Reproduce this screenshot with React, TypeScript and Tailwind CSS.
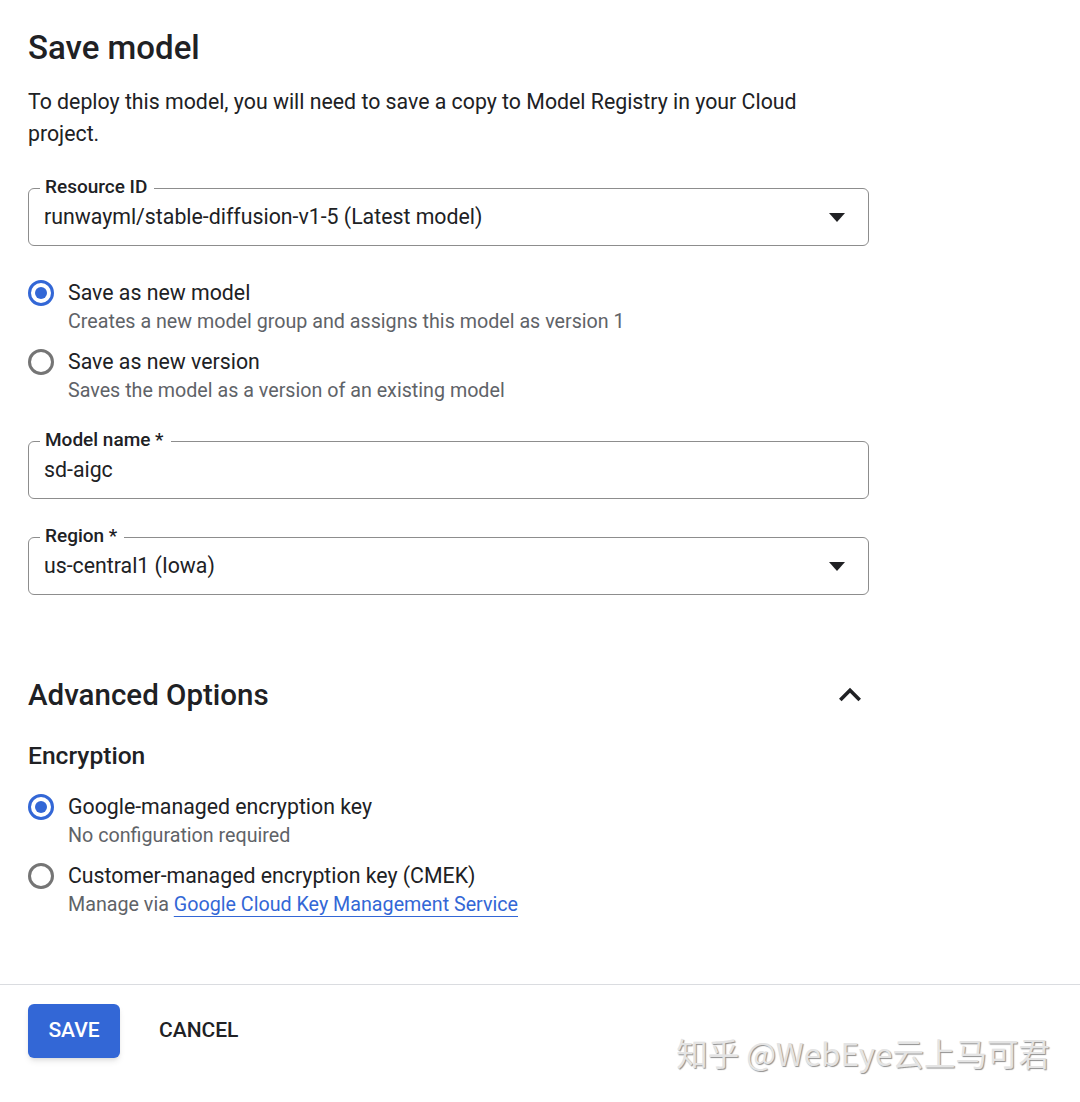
import type { ReactNode } from 'react';

const DropTriangle = () => (
  <svg width="16" height="9" viewBox="0 0 16 9" className="shrink-0">
    <polygon points="0,0 16,0 8,9" fill="#202124" />
  </svg>
);

const OutlinedField = ({ label, value, select }: { label: string; value: string; select?: boolean }) => (
  <div className="relative flex h-[58px] w-[841px] items-center justify-between rounded-[6px] border border-[#8d8d8d] pl-[15px] pr-[23px]">
    <span className="absolute left-[11px] top-[-15px] bg-white pl-[5px] pr-[7px] text-[19px] font-medium leading-[26px] text-[#202124]">
      {label}
    </span>
    <span className="text-[21.3px] leading-[30px] text-[#202124]">{value}</span>
    {select && <DropTriangle />}
  </div>
);

const Radio = ({ checked }: { checked?: boolean }) =>
  checked ? (
    <span className="mt-[2px] flex h-[26px] w-[26px] shrink-0 items-center justify-center rounded-full border-[3px] border-[#3367d6]">
      <span className="h-[12px] w-[12px] rounded-full bg-[#3367d6]" />
    </span>
  ) : (
    <span className="mt-[2px] h-[26px] w-[26px] shrink-0 rounded-full border-[3px] border-[#757575]" />
  );

const RadioOption = ({ checked, label, desc }: { checked?: boolean; label: string; desc: ReactNode }) => (
  <div className="flex gap-[14px]">
    <Radio checked={checked} />
    <div className="flex flex-col">
      <span className="text-[21.3px] leading-[30px] text-[#202124]">{label}</span>
      <span className="text-[19.7px] leading-[28px] text-[#5f6368]">{desc}</span>
    </div>
  </div>
);

export default function App() {
  return (
    <div className="relative min-h-[1102px] bg-white font-['Roboto','Liberation_Sans',sans-serif] text-[#202124]">
      <div className="flex flex-col pl-[28px] pt-[28px]">
        <h1 className="text-[33px] font-medium leading-[40px]">Save model</h1>
        <p className="mt-[18px] w-[841px] text-[21.3px] leading-[32px]">
          To deploy this model, you will need to save a copy to Model Registry in your Cloud project.
        </p>

        <div className="mt-[38px]">
          <OutlinedField label="Resource ID" value="runwayml/stable-diffusion-v1-5 (Latest model)" select />
        </div>

        <div className="mt-[32px] flex flex-col gap-[11px]">
          <RadioOption checked label="Save as new model" desc="Creates a new model group and assigns this model as version 1" />
          <RadioOption label="Save as new version" desc="Saves the model as a version of an existing model" />
        </div>

        <div className="mt-[36px]">
          <OutlinedField label="Model name *" value="sd-aigc" />
        </div>
        <div className="mt-[38px]">
          <OutlinedField label="Region *" value="us-central1 (Iowa)" select />
        </div>

        <div className="mt-[78px] flex w-[841px] items-center justify-between">
          <h2 className="text-[29.5px] font-medium leading-[36px]">Advanced Options</h2>
          <svg width="44" height="44" viewBox="0 0 24 24" className="mr-[-3px]">
            <path d="M12 8l-6 6 1.41 1.41L12 10.83l4.59 4.58L18 14z" fill="#202124" />
          </svg>
        </div>

        <h3 className="mt-[23px] text-[24.6px] font-medium leading-[32px]">Encryption</h3>

        <div className="mt-[20px] flex flex-col gap-[11px]">
          <RadioOption checked label="Google-managed encryption key" desc="No configuration required" />
          <RadioOption
            label="Customer-managed encryption key (CMEK)"
            desc={
              <>
                Manage via{' '}
                <a className="text-[#3367d6] underline decoration-1 underline-offset-[5px]">
                  Google Cloud Key Management Service
                </a>
              </>
            }
          />
        </div>
      </div>

      <div className="mt-[65px] border-t border-[#dadce0]" />

      <div className="flex items-center pl-[28px] pt-[19px]">
        <button className="h-[54px] w-[92px] rounded-[6px] bg-[#3367d6] text-[21px] font-medium text-white shadow-md">
          SAVE
        </button>
        <button className="ml-[23px] px-[16px] text-[21px] font-medium text-[#202124]">CANCEL</button>
      </div>

      <div className="absolute right-[30px] top-[1032px] font-['Noto_Sans_CJK_SC',sans-serif] text-[31.5px] leading-[40px] text-[#e4e4e4] [text-shadow:1px_1px_1px_#8f8f8f]">
        知乎 @WebEye云上马可君
      </div>
    </div>
  );
}
